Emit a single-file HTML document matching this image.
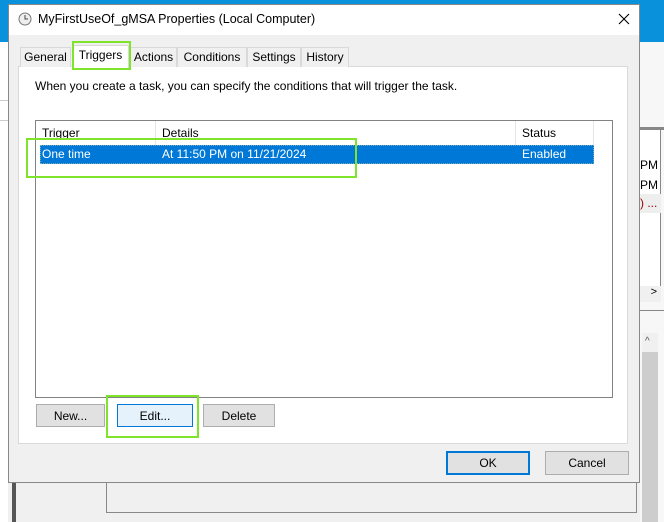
<!DOCTYPE html>
<html><head><style>
*{box-sizing:border-box;margin:0;padding:0}
body{width:664px;height:522px;position:relative;overflow:hidden;background:#f0f0f0;font-family:"Liberation Sans",sans-serif;font-size:12px;color:#000}
.a{position:absolute}
.btn{position:absolute;background:#e1e1e1;border:1px solid #adadad;text-align:center;font-size:12px;display:flex;align-items:center;justify-content:center}
.tab{position:absolute;top:47px;height:20px;border:1px solid #d9d9d9;border-bottom:none;background:#f0f0f0;line-height:18px;text-align:center;font-size:12px}
.g{position:absolute;border:2px solid #7fe52a}
</style></head><body>
<div class="a" style="left:0;top:0;width:664px;height:42px;background:#0a91dc"></div>
<div class="a" style="left:0;top:42px;width:8px;height:480px;background:#fff"></div>
<div class="a" style="left:0;top:100px;width:8px;height:1px;background:#ccc"></div>
<div class="a" style="left:0;top:120px;width:8px;height:1px;background:#ccc"></div>
<div class="a" style="left:12px;top:483px;width:4px;height:39px;background:#555"></div>
<div class="a" style="left:640px;top:42px;width:24px;height:480px;background:#f7f7f7"></div>
<div class="a" style="left:640px;top:127px;width:24px;height:3px;background:#888"></div>
<div class="a" style="left:640px;top:130px;width:21px;height:172px;background:#fff;border-right:1px solid #888"></div>
<div class="a" style="left:640px;top:158px;font-size:12px">PM</div>
<div class="a" style="left:640px;top:178px;font-size:12px">PM</div>
<div class="a" style="left:640px;top:194px;width:21px;height:19px;background:#eee;font-size:12px;line-height:19px;color:#900">) ...</div>
<div class="a" style="left:640px;top:286px;width:21px;height:16px;background:#f0f0f0;font-size:11px;text-align:right;padding-right:4px">&gt;</div>
<div class="a" style="left:640px;top:310px;width:24px;height:1px;background:#888"></div>
<div class="a" style="left:642px;top:333px;width:16px;height:189px;background:#f0f0f0"></div>
<div class="a" style="left:642px;top:352px;width:16px;height:170px;background:#cdcdcd"></div>
<div class="a" style="left:645px;top:336px;font-size:10px;color:#555">^</div>
<div class="a" style="left:106px;top:482px;width:531px;height:31px;border:1px solid #888;background:#f0f0f0"></div>

<div class="a" style="left:8px;top:4px;width:632px;height:479px;background:#f0f0f0;border:1px solid #888"></div>
<div class="a" style="left:9px;top:5px;width:630px;height:30px;background:#fff"></div>
<svg class="a" style="left:18px;top:12px" width="14" height="14"><circle cx="7" cy="7" r="6" fill="#eee" stroke="#777"/><path d="M7 3v4h3" stroke="#444" fill="none"/></svg>
<div class="a" style="left:38px;top:12px;font-size:12.5px">MyFirstUseOf_gMSA Properties (Local Computer)</div>
<svg class="a" style="left:618px;top:13px" width="12" height="12"><path d="M1 1L11 11M11 1L1 11" stroke="#000" stroke-width="1.1"/></svg>

<div class="a" style="left:18px;top:66px;width:610px;height:378px;background:#fff;border:1px solid #d9d9d9"></div>
<div class="tab" style="left:20px;width:51px">General</div>
<div class="tab" style="left:72px;top:45px;height:23px;width:57px;background:#fff">Triggers</div>
<div class="tab" style="left:130px;width:47px">Actions</div>
<div class="tab" style="left:177px;width:70px">Conditions</div>
<div class="tab" style="left:247px;width:54px">Settings</div>
<div class="tab" style="left:301px;width:48px">History</div>
<div class="g" style="left:72px;top:41px;width:59px;height:29px"></div>
<div class="a" style="left:35px;top:79px">When you create a task, you can specify the conditions that will trigger the task.</div>

<div class="a" style="left:35px;top:120px;width:578px;height:278px;background:#fff;border:1px solid #828282"></div>
<div class="a" style="left:36px;top:121px;width:558px;height:24px;border-right:1px solid #e5e5e5"></div>
<div class="a" style="left:155px;top:121px;width:1px;height:24px;background:#e5e5e5"></div>
<div class="a" style="left:515px;top:121px;width:1px;height:24px;background:#e5e5e5"></div>
<div class="a" style="left:42px;top:126px">Trigger</div>
<div class="a" style="left:162px;top:126px">Details</div>
<div class="a" style="left:522px;top:126px">Status</div>
<div class="a" style="left:40px;top:145px;width:554px;height:19px;background:#0078d7;border:1px dotted #7ab;color:#fff;line-height:17px">
<span class="a" style="left:1px">One time</span><span class="a" style="left:121px">At 11:50 PM on 11/21/2024</span><span class="a" style="left:481px">Enabled</span></div>
<div class="g" style="left:26px;top:138px;width:331px;height:40px"></div>

<div class="btn" style="left:36px;top:404px;width:69px;height:23px">New...</div>
<div class="btn" style="left:117px;top:404px;width:76px;height:23px;background:#e5f1fb;border-color:#0078d7">Edit...</div>
<div class="btn" style="left:203px;top:404px;width:72px;height:23px">Delete</div>
<div class="g" style="left:106px;top:395px;width:93px;height:43px"></div>
<div class="btn" style="left:446px;top:451px;width:84px;height:24px;border:2px solid #0078d7">OK</div>
<div class="btn" style="left:545px;top:451px;width:84px;height:24px">Cancel</div>
</body></html>
